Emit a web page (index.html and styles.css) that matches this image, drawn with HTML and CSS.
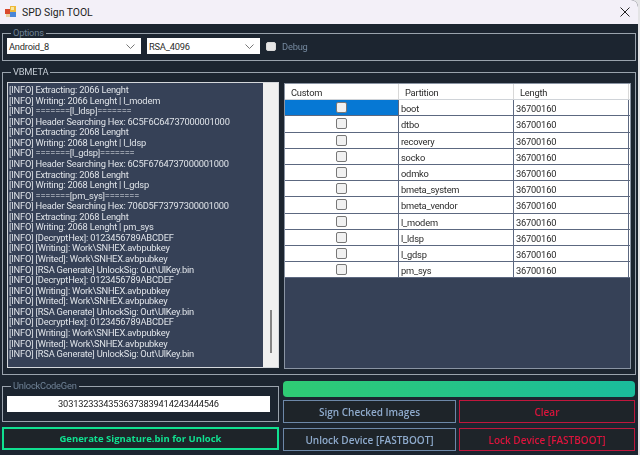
FILE: index.html
```html
<!DOCTYPE html>
<html lang="en">
<head>
<meta charset="utf-8">
<title>SPD Sign TOOL</title>
<link rel="stylesheet" href="styles.css">
</head>
<body>
<div class="window">
  <header class="titlebar">
    <svg class="app-icon" width="12" height="12" viewBox="0 0 12 12">
      <rect x="0" y="3" width="5" height="5" fill="#d9482b"/>
      <rect x="5" y="0" width="6" height="6" fill="#eeb93a"/>
      <rect x="6" y="1" width="3" height="3" fill="#f7e6a0"/>
      <rect x="1" y="8" width="4" height="3" fill="#e8d0a0"/>
      <rect x="5" y="6" width="6" height="5" fill="#4a86d8"/>
    </svg>
    <span class="title">SPD Sign TOOL</span>
    <svg class="close" width="10" height="10" viewBox="0 0 10 10"><path d="M.5.5l9 9M9.5.5l-9 9" stroke="#222" stroke-width="1" fill="none"/></svg>
  </header>
  <main class="client">
    <fieldset class="group options">
      <legend>Options</legend>
      <div class="select s1"><span>Android_8</span><svg width="9" height="5" viewBox="0 0 9 5"><path d="M.5.5l4 4 4-4" stroke="#777" fill="none"/></svg></div>
      <div class="select s2"><span>RSA_4096</span><svg width="9" height="5" viewBox="0 0 9 5"><path d="M.5.5l4 4 4-4" stroke="#777" fill="none"/></svg></div>
      <span class="box debug-box"></span><span class="debug">Debug</span>
    </fieldset>
    <fieldset class="group vbmeta">
      <legend>VBMETA</legend>
      <div class="logbox">
        <div class="log">
          <div>[INFO] Extracting: 2066 Lenght</div>
          <div>[INFO] Writing: 2066 Lenght | l_modem</div>
          <div>[INFO] =======[l_ldsp]=======</div>
          <div>[INFO] Header Searching Hex: 6C5F6C64737000001000</div>
          <div>[INFO] Extracting: 2068 Lenght</div>
          <div>[INFO] Writing: 2068 Lenght | l_ldsp</div>
          <div>[INFO] =======[l_gdsp]=======</div>
          <div>[INFO] Header Searching Hex: 6C5F6764737000001000</div>
          <div>[INFO] Extracting: 2068 Lenght</div>
          <div>[INFO] Writing: 2068 Lenght | l_gdsp</div>
          <div>[INFO] =======[pm_sys]=======</div>
          <div>[INFO] Header Searching Hex: 706D5F73797300001000</div>
          <div>[INFO] Extracting: 2068 Lenght</div>
          <div>[INFO] Writing: 2068 Lenght | pm_sys</div>
          <div>[INFO] [DecryptHex]: 0123456789ABCDEF</div>
          <div>[INFO] [Writing]: Work\SNHEX.avbpubkey</div>
          <div>[INFO] [Writed]: Work\SNHEX.avbpubkey</div>
          <div>[INFO] [RSA Generate] UnlockSig: Out\UlKey.bin</div>
          <div>[INFO] [DecryptHex]: 0123456789ABCDEF</div>
          <div>[INFO] [Writing]: Work\SNHEX.avbpubkey</div>
          <div>[INFO] [Writed]: Work\SNHEX.avbpubkey</div>
          <div>[INFO] [RSA Generate] UnlockSig: Out\UlKey.bin</div>
          <div>[INFO] [DecryptHex]: 0123456789ABCDEF</div>
          <div>[INFO] [Writing]: Work\SNHEX.avbpubkey</div>
          <div>[INFO] [Writed]: Work\SNHEX.avbpubkey</div>
          <div>[INFO] [RSA Generate] UnlockSig: Out\UlKey.bin</div>
        </div>
        <div class="scrollbar"><span class="thumb"></span></div>
      </div>
      <div class="grid">
        <div class="row head"><div>Custom</div><div>Partition</div><div>Length</div></div>
        <div class="row selected"><div class="chk"><span class="box"></span></div><div>boot</div><div>36700160</div></div>
        <div class="row"><div class="chk"><span class="box"></span></div><div>dtbo</div><div>36700160</div></div>
        <div class="row"><div class="chk"><span class="box"></span></div><div>recovery</div><div>36700160</div></div>
        <div class="row"><div class="chk"><span class="box"></span></div><div>socko</div><div>36700160</div></div>
        <div class="row"><div class="chk"><span class="box"></span></div><div>odmko</div><div>36700160</div></div>
        <div class="row"><div class="chk"><span class="box"></span></div><div>bmeta_system</div><div>36700160</div></div>
        <div class="row"><div class="chk"><span class="box"></span></div><div>bmeta_vendor</div><div>36700160</div></div>
        <div class="row"><div class="chk"><span class="box"></span></div><div>l_modem</div><div>36700160</div></div>
        <div class="row"><div class="chk"><span class="box"></span></div><div>l_ldsp</div><div>36700160</div></div>
        <div class="row"><div class="chk"><span class="box"></span></div><div>l_gdsp</div><div>36700160</div></div>
        <div class="row"><div class="chk"><span class="box"></span></div><div>pm_sys</div><div>36700160</div></div>
      </div>
    </fieldset>
    <section class="bottom">
      <div class="bottom-left">
        <fieldset class="group unlock">
          <legend>UnlockCodeGen</legend>
          <div class="code">30313233343536373839414243444546</div>
        </fieldset>
        <button class="btn green">Generate Signature.bin for Unlock</button>
      </div>
      <div class="bottom-right">
        <div class="progress"></div>
        <div class="buttons">
          <button class="btn blue">Sign Checked Images</button>
          <button class="btn red">Clear</button>
          <button class="btn blue">Unlock Device [FASTBOOT]</button>
          <button class="btn red">Lock Device [FASTBOOT]</button>
        </div>
      </div>
    </section>
  </main>
</div>
</body>
</html>
```

FILE: styles.css
```css
* { box-sizing: border-box; }
html, body { margin: 0; padding: 0; }
body {
  width: 640px; height: 455px; overflow: hidden;
  background: #e4e4e6;
  font-family: Roboto, "Open Sans", sans-serif;
  font-size: 9.3px;
  letter-spacing: -.2px;
}
.window {
  width: 638px; height: 455px; display: flex; flex-direction: column;
  background: #1c2530; border-top-right-radius: 7px; overflow: hidden;
  filter: blur(.3px);
}
.titlebar {
  height: 24px; flex: none; display: flex; align-items: center;
  background: #f3f0f8; padding: 0 8px 0 5px;
}
.title { margin-left: 5px; font-size: 10.4px; letter-spacing: 0; color: #222; }
.close { margin-left: auto; }
.client {
  flex: 1; display: flex; flex-direction: column;
  padding: 4px 2px 0 2px; background: #1c2530;
}
.group { margin: 0; border: 1px solid #9aa3ad; padding: 0; min-width: 0; }
.group legend {
  margin-left: 4px; padding: 0 2px; font-size: 9.3px; line-height: 10px; color: #6f8296;
}
.options {
  height: 33px; display: flex; align-items: center; gap: 6px; padding: 0 0 0 4px; flex: none;
}
.select {
  background: #fff; height: 16px; display: flex; align-items: center; justify-content: space-between;
  padding: 0 6px 0 2px; color: #2c2c2c;
}
.s1 { width: 134px; }
.s2 { width: 113px; }
.box {
  display: inline-block; width: 11px; height: 11px; background: #f1f1f1;
  border: 1px solid #777; border-radius: 2px;
}
.debug-box { width: 10px; height: 9px; border-color: #d8d8d8; background: #e6e6e6; }
.debug { color: #75899f; }
.vbmeta {
  margin-top: 6px; height: 308px; flex: none; display: flex; gap: 5px;
  padding: 5px 4px 0 4px; align-items: flex-start;
}
.vbmeta legend { color: #c4ccd4; }
.logbox {
  width: 272px; height: 286px; display: flex; border: 1px solid #d5d8dc;
  background: #f0f0f0; flex: none;
}
.log {
  width: 255px; height: 284px; background: #364157; color: #dfe3e8; overflow: hidden;
  line-height: 10.56px; padding: 2px 0 0 1px; white-space: nowrap;
}
.scrollbar { flex: 1; display: flex; justify-content: center; align-items: flex-start; }
.thumb { width: 2px; height: 43px; background: #858585; margin-top: 227px; }
.grid {
  flex: 1; height: 286px; margin-top: 1px; background: #364157; border: 1px solid #8a94a3; margin-right: 0;
}
.row {
  display: grid; grid-template-columns: 114px 115px 115px; height: 16.2px;
  background: #fff; border-bottom: 1px solid #5c6880; color: #2a2a2a;
  line-height: 17px;
}
.row > div { padding-left: 2px; border-right: 1px solid #5c6880; overflow: hidden; }
.row > .chk { display: flex; align-items: center; justify-content: center; padding: 0; }
.row.selected > .chk { background: #0678d4; }
.head { border-bottom-color: #cfd3d8; }
.head > div { padding-left: 6px; border-right-color: #d8d8d8; }
.bottom { flex: 1; display: flex; gap: 4px; margin-top: 6px; }
.bottom-left { width: 277px; display: flex; flex-direction: column; gap: 5px; }
.unlock {
  height: 41px; flex: none; padding: 0 8px 0 4px;
}
.unlock .code {
  background: #fff; height: 16px; color: #222; text-align: center; line-height: 16px; margin-top: 5px;
}
.btn {
  font-family: "Open Sans", "Noto Sans", sans-serif; font-weight: 600; font-size: 10px;
  background: #1e2429; padding: 0; border: 1px solid; margin: 0; letter-spacing: 0;
}
.green { height: 23px; border: 2px solid #10e090; color: #10e090; font-size: 9.5px; font-weight: 700; }
.blue { border-color: #6d88a8; color: #8fabcd; }
.red { border-color: #c0173c; color: #dc143c; }
.bottom-right { width: 352px; display: flex; flex-direction: column; }
.progress {
  height: 16px; flex: none; border-radius: 4px;
  background: linear-gradient(90deg, #2fcb74, #1abc9c);
}
.buttons {
  display: grid; grid-template-columns: 173px 176px; grid-auto-rows: 23px; gap: 5px 3px; margin-top: 3px;
}
```
